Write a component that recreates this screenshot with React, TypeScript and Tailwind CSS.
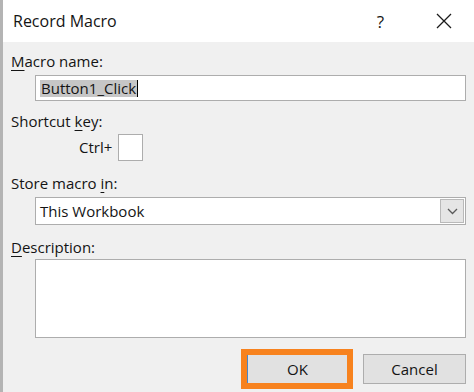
import React from "react";

const font = { fontFamily: '"Open Sans", "Noto Sans", sans-serif' };

function U({ children }: { children: React.ReactNode }) {
  return <span className="underline underline-offset-[3px] decoration-1">{children}</span>;
}

export default function App() {
  return (
    <div
      className="w-[474px] h-[392px] bg-[#f0f0f0] border-l-[3px] border-[#b4b4b4] flex flex-col text-[#141414] text-[15px] overflow-hidden"
      style={font}
    >
      <div className="h-[42px] bg-white flex items-center pl-[10px] shrink-0">
        <span className="text-[16px] leading-none">Record Macro</span>
        <span className="ml-auto text-[17px] leading-none mr-[52px]">?</span>
        <svg width="16" height="16" viewBox="0 0 16 16" className="mr-[22px]">
          <path d="M1 1 L15 15 M15 1 L1 15" stroke="#1b1b1b" strokeWidth="1.3" />
        </svg>
      </div>
      <div className="flex flex-col pl-[8px] pr-[8px]">
        <div className="h-[22px] mt-[8px] flex items-center leading-none">
          <span><U>M</U>acro name:</span>
        </div>
        <div className="ml-[24px] mt-[3px] h-[26px] bg-white border border-[#adadad] flex items-center pl-[4px]">
          <span className="bg-[#c6c6c6] leading-[17px] px-[1px]">Button1_Click</span>
          <span className="w-px h-[17px] bg-black" />
        </div>
        <div className="h-[22px] mt-[9px] flex items-center leading-none">
          <span>Shortcut <U>k</U>ey:</span>
        </div>
        <div className="mt-[2px] h-[27px] flex items-center">
          <span className="ml-[68px] leading-none">Ctrl+</span>
          <div className="ml-[6px] w-[25px] h-[27px] bg-white border border-[#adadad]" />
        </div>
        <div className="h-[22px] mt-[11px] flex items-center leading-none">
          <span>Store macro <U>i</U>n:</span>
        </div>
        <div className="ml-[24px] mt-[3px] h-[28px] bg-white border border-[#adadad] flex items-stretch">
          <span className="flex-1 flex items-center pl-[4px] leading-none">This Workbook</span>
          <div className="w-[24px] bg-[#e5e5e5] border border-[#b9b9b9] m-px flex items-center justify-center">
            <svg width="11" height="7" viewBox="0 0 11 7">
              <path d="M1 1 L5.5 5.5 L10 1" stroke="#5a5a5a" strokeWidth="1.3" fill="none" />
            </svg>
          </div>
        </div>
        <div className="h-[22px] mt-[11px] flex items-center leading-none">
          <span><U>D</U>escription:</span>
        </div>
        <div className="ml-[24px] mt-[1px] h-[79px] bg-white border border-[#adadad]" />
        <div className="mt-[11px] flex items-center justify-end gap-[10px]">
          <div className="w-[112px] h-[40px] border-[6px] border-[#f7821e] flex">
            <div className="flex-1 bg-[#e1e1e1] border-l border-[#4a86c8] flex items-center justify-center leading-none">
              OK
            </div>
          </div>
          <div className="w-[103px] h-[30px] bg-[#e1e1e1] border border-[#adadad] flex items-center justify-center leading-none">
            Cancel
          </div>
        </div>
      </div>
    </div>
  );
}
